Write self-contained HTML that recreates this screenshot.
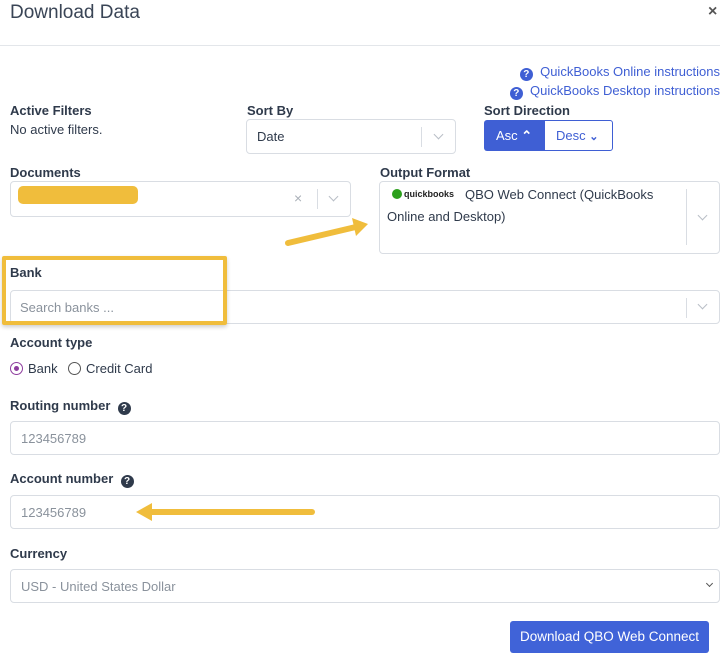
<!DOCTYPE html>
<html><head><style>
*{box-sizing:border-box;margin:0;padding:0}
body{width:720px;height:668px;background:#fff;font-family:"Liberation Sans",sans-serif;color:#2f3a4b;position:relative;overflow:hidden;font-size:13px}
.a{position:absolute}
.lbl{position:absolute;font-weight:bold;font-size:13px;color:#2f3a4b}
.box{position:absolute;border:1px solid #d9dde3;border-radius:4px;background:#fff}
.ph{position:absolute;color:#8a929c;font-size:13px}
.q{display:inline-block;width:13px;height:13px;border-radius:50%;background:#3f5fd4;color:#fff;font-size:10px;font-weight:bold;text-align:center;line-height:13px;vertical-align:-1px}
.qd{background:#2f3a4b}
.sep{position:absolute;width:1px;background:#d9dde3}
.chev{position:absolute;width:7px;height:7px;border-right:1.3px solid #b8bec6;border-bottom:1.3px solid #b8bec6;transform:rotate(45deg)}
</style></head><body>
<div class="a" style="left:10px;top:2px;font-size:19px;color:#3a4556">Download Data</div>
<div class="a" style="left:708px;top:3px;font-size:16px;font-weight:bold;color:#555">×</div>
<div class="a" style="left:0;top:45px;width:720px;height:1px;background:#e3e6ea"></div>

<div class="a" style="right:0;top:64px;color:#3f5fd4;font-size:13px"><span class="q">?</span>&nbsp; QuickBooks Online instructions</div>
<div class="a" style="right:0;top:83px;color:#3f5fd4;font-size:13px"><span class="q">?</span>&nbsp; QuickBooks Desktop instructions</div>

<div class="lbl" style="left:10px;top:103px">Active Filters</div>
<div class="a" style="left:10px;top:122px">No active filters.</div>

<div class="lbl" style="left:247px;top:103px">Sort By</div>
<div class="box" style="left:246px;top:119px;width:210px;height:35px"></div>
<div class="a" style="left:257px;top:129px">Date</div>
<div class="sep" style="left:421px;top:127px;height:20px"></div>
<div class="chev" style="left:435px;top:131px"></div>

<div class="lbl" style="left:484px;top:103px">Sort Direction</div>
<div class="a" style="left:484px;top:120px;width:61px;height:31px;background:#3f5fd4;border-radius:3px 0 0 3px;color:#fff;padding:8px 0 0 12px">Asc <b>&#8963;</b></div>
<div class="a" style="left:544px;top:120px;width:69px;height:31px;border:1px solid #3f5fd4;border-radius:0 3px 3px 0;color:#3f5fd4;padding:7px 0 0 11px">Desc <b style="font-size:11px">&#8964;</b></div>

<div class="lbl" style="left:10px;top:165px">Documents</div>
<div class="box" style="left:10px;top:181px;width:341px;height:36px"></div>
<div class="a" style="left:18px;top:186px;width:120px;height:18px;background:#f0bd3c;border-radius:5px"></div>
<div class="a" style="left:294px;top:190px;color:#aab0b8;font-size:14px">×</div>
<div class="sep" style="left:317px;top:189px;height:20px"></div>
<div class="chev" style="left:330px;top:193px"></div>

<div class="lbl" style="left:380px;top:165px">Output Format</div>
<div class="box" style="left:379px;top:181px;width:341px;height:73px"></div>
<div class="a" style="left:392px;top:189px;width:10px;height:10px;border-radius:50%;background:#2ca01c"></div>
<div class="a" style="left:404px;top:189px;font-size:9px;font-weight:bold;color:#222">quickbooks</div>
<div class="a" style="left:465px;top:187px">QBO Web Connect (QuickBooks</div>
<div class="a" style="left:387px;top:209px">Online and Desktop)</div>
<div class="sep" style="left:686px;top:189px;height:56px"></div>
<div class="chev" style="left:699px;top:212px"></div>

<svg class="a" style="left:280px;top:215px" width="100" height="40"><path d="M8 28 L80 11" stroke="#f0bd3c" stroke-width="6" stroke-linecap="round"/><path d="M72 3 L88 9 L76 21 Z" fill="#f0bd3c"/></svg>

<div class="box" style="left:10px;top:290px;width:710px;height:34px"></div>
<div class="a" style="left:2px;top:256px;width:225px;height:69px;border:4px solid #f0bd3c;border-radius:2px;box-shadow:0 2px 4px rgba(0,0,0,.2)"></div>
<div class="lbl" style="left:10px;top:265px">Bank</div>
<div class="ph" style="left:20px;top:300px">Search banks ...</div>
<div class="sep" style="left:686px;top:298px;height:20px"></div>
<div class="chev" style="left:699px;top:301px"></div>

<div class="lbl" style="left:10px;top:335px">Account type</div>
<div class="a" style="left:10px;top:362px;width:13px;height:13px;border:1.5px solid #8e3d9e;border-radius:50%"><div style="margin:2.5px;width:5px;height:5px;border-radius:50%;background:#8e3d9e"></div></div>
<div class="a" style="left:28px;top:361px">Bank</div>
<div class="a" style="left:68px;top:362px;width:13px;height:13px;border:1.5px solid #555;border-radius:50%"></div>
<div class="a" style="left:86px;top:361px">Credit Card</div>

<div class="lbl" style="left:10px;top:398px">Routing number &nbsp;<span class="q qd">?</span></div>
<div class="box" style="left:10px;top:421px;width:710px;height:34px"></div>
<div class="ph" style="left:21px;top:431px">123456789</div>

<div class="lbl" style="left:10px;top:471px">Account number &nbsp;<span class="q qd">?</span></div>
<div class="box" style="left:10px;top:495px;width:710px;height:34px"></div>
<div class="ph" style="left:21px;top:505px">123456789</div>
<svg class="a" style="left:130px;top:500px" width="190" height="26"><path d="M18 12 L182 12" stroke="#f0bd3c" stroke-width="6" stroke-linecap="round"/><path d="M6 12 L22 3 L22 21 Z" fill="#f0bd3c"/></svg>

<div class="lbl" style="left:10px;top:546px">Currency</div>
<div class="box" style="left:10px;top:569px;width:710px;height:34px"></div>
<div class="ph" style="left:21px;top:579px">USD - United States Dollar</div>
<div class="chev" style="left:707px;top:581px;width:5px;height:5px;border-color:#555"></div>

<div class="a" style="left:510px;top:621px;width:199px;height:32px;background:#4063d8;border-radius:3px;color:#fff;font-size:13.5px;text-align:center;line-height:32px">Download QBO Web Connect</div>
</body></html>
